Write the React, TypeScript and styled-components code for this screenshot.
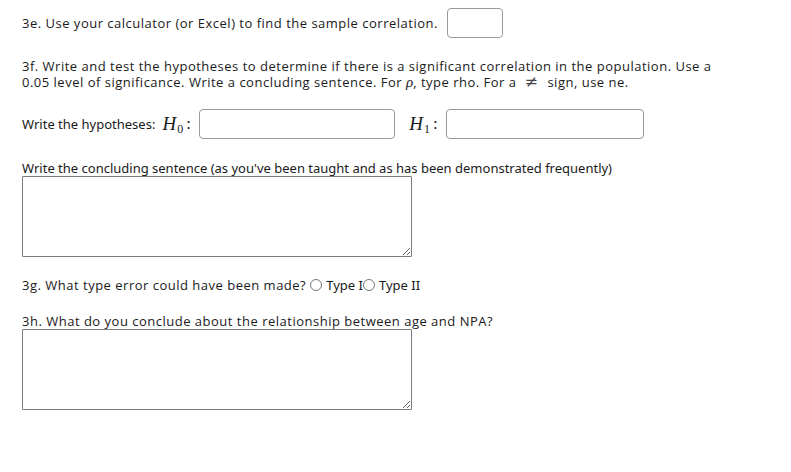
import * as React from "react";
import styled, { createGlobalStyle } from "styled-components";

const GlobalStyle = createGlobalStyle`
  html, body {
    margin: 0;
    padding: 0;
    background: #ffffff;
  }
`;

const Page = styled.div`
  box-sizing: border-box;
  width: 791px;
  height: 472px;
  padding: 8px 22px 0 22px;
  font-family: "Open Sans", "DejaVu Sans", sans-serif;
  font-size: 13px;
  letter-spacing: 0.5px;
  color: #1a1a1a;
`;

const Row = styled.div<{ mt?: number }>`
  display: flex;
  align-items: center;
  margin-top: ${(p) => p.mt ?? 0}px;
`;

const Para = styled.p<{ mt?: number }>`
  margin: ${(p) => p.mt ?? 0}px 0 0 0;
  line-height: 16px;
  white-space: nowrap;
`;

const Label = styled.span`
  white-space: nowrap;
`;

const UiText = styled.span`
  font-family: "Noto Sans", "DejaVu Sans", sans-serif;
  font-size: 13px;
  letter-spacing: 0;
  white-space: nowrap;
`;

const Box = styled.input<{ w: number }>`
  box-sizing: border-box;
  flex-shrink: 0;
  width: ${(p) => p.w}px;
  height: 30px;
  border: 1px solid #9a9a9a;
  border-radius: 4px;
  background: #fff;
  margin: 0;
  padding: 0 6px;
`;

const Area = styled.textarea`
  box-sizing: border-box;
  display: block;
  width: 390px;
  height: 81px;
  border: 1px solid #7a7a7a;
  border-radius: 1px;
  background: #fff;
  margin: 0;
  resize: both;
`;

const MathVar = styled.span<{ size?: number }>`
  font-family: "Liberation Serif", "DejaVu Serif", serif;
  font-style: italic;
  font-size: ${(p) => p.size ?? 15}px;
  letter-spacing: 0;
  line-height: 1;
  flex-shrink: 0;
`;

const Sub = styled.sub`
  font-style: normal;
  font-size: 12px;
  vertical-align: -3px;
  margin-left: 1px;
`;

const Colon = styled.span`
  font-family: "Liberation Serif", serif;
  font-size: 17px;
  margin: 0 8px 0 3px;
`;

const Neq = styled.span`
  display: inline-block;
  height: 14px;
  font-family: "DejaVu Sans", sans-serif;
  font-size: 16px;
  line-height: 14px;
  margin: 0 9px 0 8px;
  color: #444;
`;

const Radio = styled.input`
  width: 12px;
  height: 12px;
  margin: 0 4px 0 4px;
  accent-color: #555;
`;

export default function App() {
  return (
    <>
      <GlobalStyle />
      <Page>
        <Row>
          <Label>3e. Use your calculator (or Excel) to find the sample correlation.</Label>
          <Box w={56} style={{ marginLeft: 9 }} />
        </Row>

        <Para mt={20}>
          3f. Write and test the hypotheses to determine if there is a significant correlation in the population. Use a
          <br />
          0.05 level of significance. Write a concluding sentence. For <MathVar>ρ</MathVar>, type rho. For a
          <Neq>≠</Neq>sign, use ne.
        </Para>

        <Row mt={19}>
          <UiText>Write the hypotheses:</UiText>
          <MathVar size={19} style={{ marginLeft: 7 }}>
            H<Sub>0</Sub>
          </MathVar>
          <Colon>:</Colon>
          <Box w={196} />
          <MathVar size={19} style={{ marginLeft: 14 }}>
            H<Sub>1</Sub>
          </MathVar>
          <Colon>:</Colon>
          <Box w={198} />
        </Row>

        <Para mt={21}>
          <UiText>Write the concluding sentence (as you've been taught and as has been demonstrated frequently)</UiText>
        </Para>
        <Area />

        <Row mt={19}>
          <Label>3g. What type error could have been made?</Label>
          <Radio type="radio" name="err" />
          <UiText>Type I</UiText>
          <Radio type="radio" name="err" style={{ marginLeft: 0 }} />
          <UiText>Type II</UiText>
        </Row>

        <Para mt={19}>3h. What do you conclude about the relationship between age and NPA?</Para>
        <Area />
      </Page>
    </>
  );
}
